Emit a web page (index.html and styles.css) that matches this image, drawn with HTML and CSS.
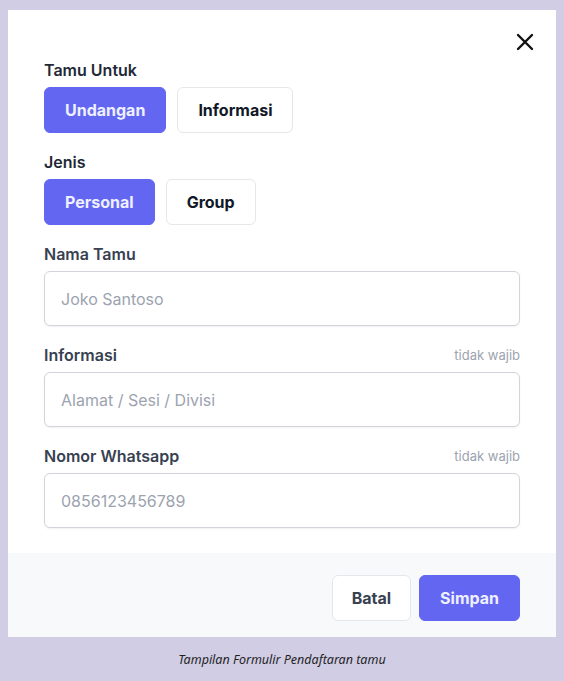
FILE: index.html
```html
<!DOCTYPE html>
<html>

<head>
  <meta charset="utf-8" />
  <meta name="viewport" content="width=device-width, initial-scale=1" />
  <title>Formulir Tamu</title>
  <link rel="stylesheet" href="styles.css">
</head>

<body>
  <div class="modal">
    <button class="close" type="button" aria-label="Tutup">
      <svg width="18" height="18" viewBox="0 0 18 18">
        <path d="M2 2 L16 16 M16 2 L2 16" stroke="#111" stroke-width="2.4" stroke-linecap="round" fill="none" />
      </svg>
    </button>

    <div class="body">
      <div class="field first">
        <div class="label">Tamu Untuk</div>
        <div class="toggles">
          <button class="tgl active">Undangan</button>
          <button class="tgl">Informasi</button>
        </div>
      </div>

      <div class="field">
        <div class="label">Jenis</div>
        <div class="toggles">
          <button class="tgl active">Personal</button>
          <button class="tgl">Group</button>
        </div>
      </div>

      <div class="field">
        <div class="label">Nama Tamu</div>
        <input type="text" class="inp" placeholder="Joko Santoso" />
      </div>

      <div class="field">
        <div class="label">Informasi <span class="opt">tidak wajib</span></div>
        <input type="text" class="inp" placeholder="Alamat / Sesi / Divisi" />
      </div>

      <div class="field">
        <div class="label">Nomor Whatsapp <span class="opt">tidak wajib</span></div>
        <input type="text" class="inp" placeholder="0856123456789" />
      </div>
    </div>

    <div class="foot">
      <button class="btn">Batal</button>
      <button class="btn primary">Simpan</button>
    </div>
  </div>

  <p class="caption">Tampilan Formulir Pendaftaran tamu</p>
</body>

</html>
```

FILE: styles.css
```css
body {
  margin: 0;
  background: #d1cde5;
  font-family: Inter, "Noto Sans", sans-serif;
  color: #1f2937;
}

.modal {
  position: relative;
  margin: 10px 8px 0;
  background: #fff;
}

.close {
  position: absolute;
  top: 23px;
  right: 22px;
  padding: 0;
  border: 0;
  background: none;
  width: 18px;
  height: 18px;
}

.body {
  padding: 48px 36px 25px;
}

.field {
  margin-top: 17px;
}

.field.first {
  margin-top: 0;
}

.label {
  display: flex;
  justify-content: space-between;
  align-items: center;
  font-size: 16px;
  line-height: 24px;
  font-weight: 600;
  color: #374151;
  margin-bottom: 5px;
}

.field.first .label,
.field:nth-child(2) .label {
  color: #1f2937;
}

.opt {
  font-size: 13px;
  line-height: 20px;
  font-weight: 400;
  color: #9ca3af;
}

.toggles {
  display: flex;
  gap: 11px;
}

.tgl,
.btn {
  font-family: inherit;
  font-size: 16px;
  line-height: 24px;
  font-weight: 700;
  padding: 10px 20px;
  border: 1px solid #e5e7eb;
  border-radius: 6px;
  background: #fff;
  color: #111827;
}

.tgl.active,
.btn.primary {
  background: #6366f1;
  border-color: #6366f1;
  color: #eef0ff;
}

.inp {
  display: block;
  box-sizing: border-box;
  width: 100%;
  height: 55px;
  padding: 0 16px;
  border: 1px solid #d1d5db;
  border-radius: 6px;
  box-shadow: 0 1px 2px rgba(0, 0, 0, 0.06);
  font-family: inherit;
  font-size: 16px;
  color: #111827;
}

.inp::placeholder {
  color: #9ca3af;
}

.foot {
  display: flex;
  justify-content: flex-end;
  gap: 8px;
  padding: 22px 36px 16px;
  background: #f8f9fb;
}

.btn {
  color: #374151;
  padding: 10px 19px;
}

.btn.primary {
  padding: 10px 20px;
}

.caption {
  margin: 14px 0 0;
  text-align: center;
  font-family: "Noto Sans", sans-serif;
  font-style: italic;
  font-size: 12.5px;
  color: #1f1f1f;
}
```
